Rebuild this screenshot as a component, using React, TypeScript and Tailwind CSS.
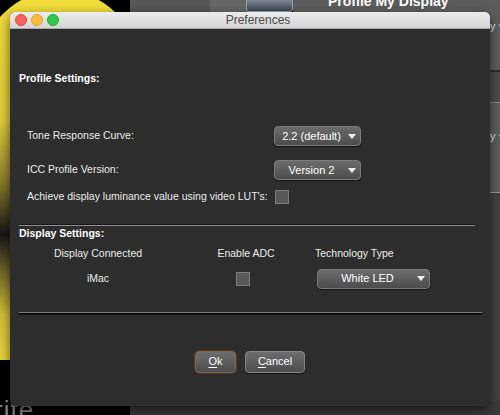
import React from "react";

const font = { fontFamily: '"Liberation Sans", Arial, Helvetica, sans-serif' };

interface DropdownProps {
  label: string;
  className?: string;
}

const Dropdown: React.FC<DropdownProps> = ({ label, className }) => {
  return (
    <div
      className={`flex h-[20px] items-center rounded-[4px] border border-[#7a7a7a] bg-[linear-gradient(#6c6c6c,#4c4c4c)] shadow-[0_1px_1px_rgba(0,0,0,0.6)] ${className ?? ""}`}
    >
      <span className="flex-1 text-center text-[11px] text-white">{label}</span>
      <svg width="8" height="5" viewBox="0 0 8 5" className="mr-[4px]">
        <path d="M0 0 L8 0 L4 5 Z" fill="#f2f2f2" />
      </svg>
    </div>
  );
};

const Checkbox: React.FC = () => (
  <div className="h-[14px] w-[14px] border border-[#7c7c7c] bg-[#595959]" />
);

interface ButtonProps {
  first: string;
  rest: string;
  focused?: boolean;
  width: string;
}

const Button: React.FC<ButtonProps> = ({ first, rest, focused, width }) => (
  <div
    className={`flex h-[22px] ${width} items-center justify-center rounded-[4px] border bg-[linear-gradient(#6e6e6e,#4d4d4d)] text-[11px] text-white shadow-[0_1px_1px_rgba(0,0,0,0.6)] ${focused ? "border-[#7d6a45] ring-1 ring-[#4a3c22]" : "border-[#858585]"}`}
  >
    <span>
      <span className="underline underline-offset-2">{first}</span>
      {rest}
    </span>
  </div>
);

const Desktop: React.FC = () => (
  <>
    {/* yellow logo shape on the left */}
    <div className="absolute left-[-20px] top-[-10px] h-[370px] w-[160px] rounded-t-[80px] bg-[linear-gradient(#f3df3a_0%,#e3cf38_35%,#8a7d2a_52%,#161616_66%,#6f6528_76%,#d6c238_88%,#ead53a_100%)]" />
    {/* grey panels across the top */}
    <div className="absolute left-[130px] top-0 h-[14px] w-[80px] bg-[#575757]" />
    <div className="absolute left-[210px] top-0 h-[14px] w-[40px] bg-[#676767]" />
    <div className="absolute left-[246px] top-[-4px] h-[16px] w-[47px] rounded-[3px] border border-[#9aa4ae] bg-[linear-gradient(#8e9aa6,#3c4652)]" />
    <div className="absolute left-[293px] top-0 h-[14px] w-[207px] bg-[#5c5c5c]">
      <span className="absolute left-[35px] top-[-9px] whitespace-nowrap text-[14px] font-bold text-white">
        Profile My Display
      </span>
    </div>
    {/* right strip */}
    <div className="absolute right-0 top-[14px] flex h-[401px] w-[10px] flex-col overflow-hidden">
      <div className="h-[56px] whitespace-nowrap bg-[#5e5e5e] pt-[5px] text-[11px] leading-[14px] text-[#e6e6e6]">
        y ▾
      </div>
      <div className="h-[2px] bg-[#2e2e2e]" />
      <div className="h-[30px] bg-[#4c4c4c]" />
      <div className="h-[1px] bg-[#8a8a8a]" />
      <div className="h-[89px] whitespace-nowrap bg-[#5e5e5e] pt-[26px] text-[11px] leading-[14px] text-[#e6e6e6]">
        y ▾
      </div>
      <div className="h-[1px] bg-[#9a9a9a]" />
      <div className="flex-1 bg-[#424242]" />
    </div>
    {/* bottom band */}
    <div className="absolute bottom-0 left-[130px] h-[14px] w-[370px] bg-[#3b3b3b]" />
    <span className="absolute bottom-[-10px] left-[-6px] text-[26px] font-light leading-[30px] tracking-[1px] text-[#8a8a8a]">
      rite
    </span>
  </>
);

const Preferences: React.FC = () => (
  <div
    className="absolute left-[10px] top-[12px] flex h-[394px] w-[480px] flex-col overflow-hidden rounded-[5px] bg-[#2d2d2d] shadow-[0_4px_12px_rgba(0,0,0,0.6)]"
    style={font}
  >
    <div className="relative flex h-[17px] items-center border-b border-[#a9a9a9] bg-[linear-gradient(#ececec,#d4d4d4)] pl-[5px]">
      <div className="flex gap-[4px]">
        <span className="h-[12px] w-[12px] rounded-full border border-[#e2463f] bg-[#fc605c]" />
        <span className="h-[12px] w-[12px] rounded-full border border-[#e1a116] bg-[#fdbc40]" />
        <span className="h-[12px] w-[12px] rounded-full border border-[#14ae2d] bg-[#34c84a]" />
      </div>
      <span className="absolute left-[16px] right-0 text-center text-[12px] text-[#4a4a4a]">
        Preferences
      </span>
    </div>

    <div className="flex flex-col pl-[9px] text-[10.5px] text-[#ececec]">
      <div className="mt-[42px] h-[14px] font-bold leading-[14px] text-white">
        Profile Settings:
      </div>

      <div className="mt-[41px] flex flex-col pl-[8px]">
        <div className="flex items-center">
          <span className="w-[247px]">Tone Response Curve:</span>
          <Dropdown label="2.2 (default)" className="w-[87px]" />
        </div>
        <div className="mt-[14px] flex items-center">
          <span className="w-[247px]">ICC Profile Version:</span>
          <Dropdown label="Version 2" className="w-[87px]" />
        </div>
        <div className="mt-[9px] flex items-center gap-[7px]">
          <span>Achieve display luminance value using video LUT's:</span>
          <Checkbox />
        </div>
      </div>

      <div className="mt-[19px] w-[456px] border-b border-t border-b-[#8e8e8e] border-t-[#161616]" />

      <div className="h-[14px] font-bold leading-[14px] text-white">Display Settings:</div>

      <div className="mt-[6px] grid grid-cols-[158px_138px_1fr] items-center">
        <span className="text-center">Display Connected</span>
        <span className="text-center">Enable ADC</span>
        <span>Technology Type</span>
      </div>
      <div className="mt-[7px] grid grid-cols-[158px_132px_1fr] items-center">
        <span className="text-center">iMac</span>
        <div className="flex justify-center">
          <Checkbox />
        </div>
        <Dropdown label="White LED" className="ml-[8px] w-[113px]" />
      </div>

      <div className="mt-[23px] w-[463px] border-t border-[#7a7a7a]">
        <div className="h-[2px] bg-[#0d0d0d]" />
      </div>

      <div className="mt-[36px] flex justify-center gap-[9px] pr-[9px]">
        <Button first="O" rest="k" focused width="w-[41px]" />
        <Button first="C" rest="ancel" width="w-[60px]" />
      </div>
    </div>
  </div>
);

export default function App() {
  return (
    <div className="relative h-[415px] w-[500px] overflow-hidden bg-black" style={font}>
      <Desktop />
      <Preferences />
    </div>
  );
}
